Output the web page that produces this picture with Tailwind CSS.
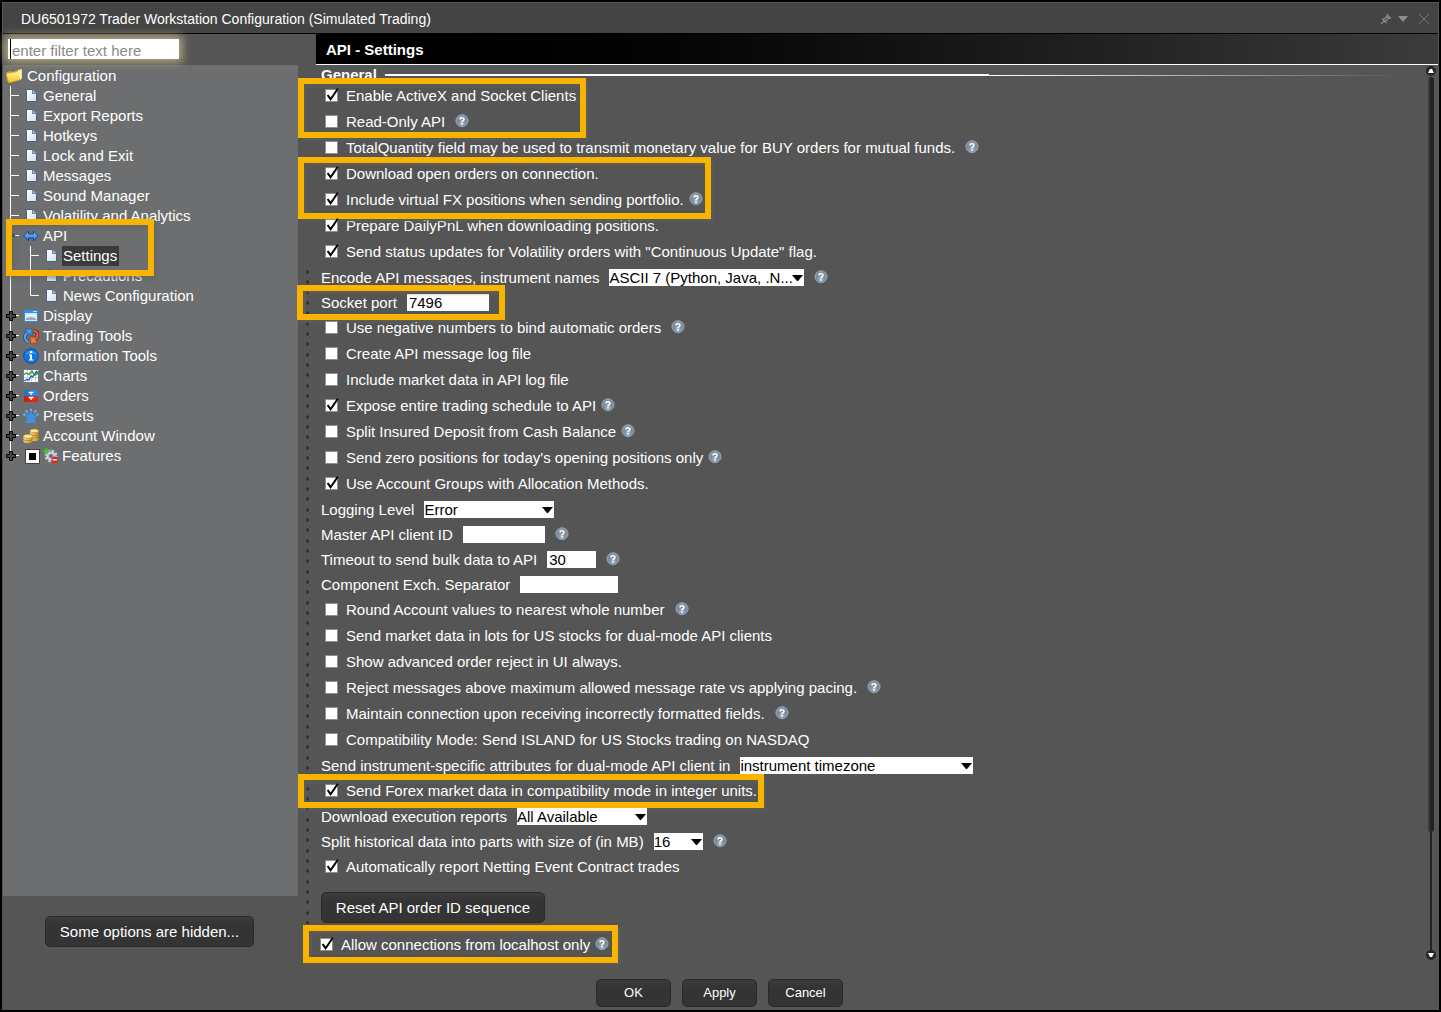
<!DOCTYPE html>
<html lang="en">
<head>
    <meta charset="UTF-8">
    <meta name="viewport" content="width=device-width, initial-scale=1.0">
    <title>Trader Workstation Configuration</title>
    <script src="https://cdn.jsdelivr.net/npm/@tailwindcss/browser@4"></script>
</head>
<body class="bg-black font-['Liberation_Sans',Arial,sans-serif] text-[15px] leading-5 text-white">
    <!-- icon sprite -->
    <svg class="absolute h-0 w-0">
        <defs>
            <radialGradient id="helpFill" cx=".5" cy=".7" r=".6">
                <stop offset="0" stop-color="#a9bccd"/>
                <stop offset=".6" stop-color="#76899c"/>
                <stop offset="1" stop-color="#8593a1"/>
            </radialGradient>
            <linearGradient id="docFill" x1="0" y1="0" x2="1" y2="1">
                <stop offset="0" stop-color="#ffffff"/>
                <stop offset="1" stop-color="#cfe0f5"/>
            </linearGradient>
            <linearGradient id="folderFill" x1="0" y1="0" x2="0" y2="1">
                <stop offset="0" stop-color="#fff3a0"/>
                <stop offset="1" stop-color="#f0c419"/>
            </linearGradient>
            <linearGradient id="blueFill" x1="0" y1="0" x2="0" y2="1">
                <stop offset="0" stop-color="#8cc4fb"/>
                <stop offset="1" stop-color="#1f6fd6"/>
            </linearGradient>
            <linearGradient id="coinFill" x1="0" y1="0" x2="1" y2="0">
                <stop offset="0" stop-color="#fbe08a"/>
                <stop offset="1" stop-color="#c98f22"/>
            </linearGradient>
            <pattern id="dots" width="3" height="31" patternUnits="userSpaceOnUse">
                <rect y="1" width="3" height="2" rx="1" fill="#2c2c2c"/><rect x="1" width="1" height="4" fill="#2c2c2c"/>
                <rect y="11" width="3" height="2" rx="1" fill="#2c2c2c"/><rect x="1" y="10" width="1" height="4" fill="#2c2c2c"/>
                <rect y="22" width="3" height="2" rx="1" fill="#2c2c2c"/><rect x="1" y="21" width="1" height="4" fill="#2c2c2c"/>
            </pattern>
        </defs>
        <symbol id="help" viewBox="0 0 14 14">
            <circle cx="7" cy="7.6" r="6.2" fill="#3f4347"/>
            <circle cx="7" cy="6.8" r="6.1" fill="url(#helpFill)" stroke="#a3adb6" stroke-width=".8"/>
            <path d="M5 5.4C5 3.2 9 3.2 9 5.3C9 6.7 7 6.6 7 8.3" fill="none" stroke="#fff" stroke-width="1.5"/>
            <rect x="6.2" y="9.2" width="1.6" height="1.5" fill="#fff"/>
        </symbol>
        <symbol id="tick" viewBox="0 0 15 15">
            <path d="M2.600 7L5.600 11.200L12.800 .8" fill="none" stroke="#000" stroke-width="2"/>
        </symbol>
        <symbol id="caret" viewBox="0 0 11 6"><path d="M0 0H11L6 6H5Z" fill="#000"/></symbol>
        <symbol id="line" viewBox="0 0 16 20"><path d="M7.5 0V20M8 9.5H17" stroke="#fff" fill="none"/></symbol>
        <symbol id="plus" viewBox="0 0 16 20">
            <path d="M7.5 0V20M8 9.5H17" stroke="#fff" fill="none"/>
            <path d="M6.5 5.5H9.5V8.5H12.5V11.5H9.5V14.5H6.5V11.5H3.5V8.5H6.5Z" fill="#444" stroke="#000"/>
        </symbol>
        <symbol id="plusEnd" viewBox="0 0 16 20">
            <path d="M7.5 0V9M8 9.5H17" stroke="#fff" fill="none"/>
            <path d="M6.5 5.5H9.5V8.5H12.5V11.5H9.5V14.5H6.5V11.5H3.5V8.5H6.5Z" fill="#444" stroke="#000"/>
        </symbol>
        <symbol id="minus" viewBox="0 0 16 20">
            <path d="M12 9.5H17" stroke="#fff" fill="none"/>
            <rect x="9" y="8" width="3" height="3" fill="#444"/>
        </symbol>
        <symbol id="sub" viewBox="0 0 36 20"><path d="M7.5 0V20M27.5 0V20M28 9.5H36" stroke="#fff" fill="none"/></symbol>
        <symbol id="subFirst" viewBox="0 0 36 20"><path d="M27.5 0V20M28 9.5H36" stroke="#fff" fill="none"/></symbol>
        <symbol id="subEnd" viewBox="0 0 36 20"><path d="M7.5 0V20M27.5 0V9.5H36" stroke="#fff" fill="none"/></symbol>
        <symbol id="folder" viewBox="0 0 16 16">
            <path d="M0 4.500L4 3L6 4L14 1L15.500 2.500V11L5 14.500L1 13Z" fill="#d9a81c"/>
            <path d="M0 5.500L11.500 3.500L12.500 4.500L14 12L2.500 15Z" fill="url(#folderFill)" stroke="#b98f14" stroke-width=".6"/>
            <path d="M11.500 3L15.800 1V10.500L14 12Z" fill="#fff2a8"/>
        </symbol>
        <symbol id="doc" viewBox="0 0 16 16">
            <path d="M3.500 1.500H9.500L13.500 5.500V13.500H3.500Z" fill="url(#docFill)" stroke="#4d617f"/>
            <path d="M9.500 1.500V5.500H13.500" fill="#9fb8d8" stroke="#4d617f" stroke-width=".7"/>
        </symbol>
        <symbol id="api" viewBox="0 0 16 16">
            <path d="M.7 8L5.500 3V6H10.500V3L15.300 8L10.500 13V10H5.500V13Z" fill="url(#blueFill)" stroke="#12479a" stroke-width="1"/>
        </symbol>
        <symbol id="display" viewBox="0 0 16 16">
            <rect x="1.500" y="2.500" width="13" height="11" fill="#dceaf8" stroke="#2f8be6"/>
            <rect x="1" y="2" width="14" height="3" fill="#2593f5"/>
            <rect x="10" y="3" width="4" height="1" fill="#bfe0ff"/>
            <path d="M3 10L8 9L13 10.500V12H3Z" fill="#9aa9ba"/>
            <path d="M3 7.500H13" stroke="#fff"/>
        </symbol>
        <symbol id="trading" viewBox="0 0 16 16">
            <path d="M5.500 14C.5 11.500 1 6 5 4.500" fill="none" stroke="#1c4f9c" stroke-width="3.400"/>
            <path d="M5.500 14C.5 11.500 1 6 5 4.500" fill="none" stroke="#6fb0f3" stroke-width="1.600"/>
            <path d="M2.500 .8H9V8L7 5.500L5 7.500L3.500 3Z" fill="#4b94e6" stroke="#1c4f9c" stroke-width=".6"/>
            <path d="M10.500 2.500C16 4 15.500 10 11.500 11.500" fill="none" stroke="#8d2712" stroke-width="3.400"/>
            <path d="M10.500 2.500C16 4 15.500 10 11.500 11.500" fill="none" stroke="#f26640" stroke-width="1.600"/>
            <path d="M14 15H7.500V8L9.500 10L11.500 8.500L13 12.500Z" fill="#fb7748" stroke="#a83216" stroke-width=".6"/>
        </symbol>
        <symbol id="info" viewBox="0 0 16 16">
            <circle cx="8" cy="8" r="7.400" fill="#0f76e0" stroke="#0a53ad"/>
            <path d="M2.500 6A6 5 0 0 1 13.500 6Z" fill="#4ba4f5" opacity=".6"/>
            <rect x="7" y="3" width="2.200" height="2" fill="#fff"/>
            <path d="M6 6.500H9V11.500H10.500V12.500H5.800V11.500H7V7.500H6Z" fill="#fff"/>
        </symbol>
        <symbol id="chart" viewBox="0 0 16 16">
            <rect x=".5" y="1.500" width="15" height="13" fill="#f3f6fa" stroke="#6e7b8c"/>
            <path d="M4.500 2V14M8.500 2V14M12.500 2V14M1 5.500H15M1 9.500H15" stroke="#cbd2dc" fill="none"/>
            <path d="M1 13L4 11.500L6 12L8 8L9.500 9L13.500 3.500L15 5" fill="none" stroke="#2c5fb5" stroke-width="1.300"/>
            <path d="M1 6.500L3.500 5L6 6.500L9 3L11.500 7L15 5.500" fill="none" stroke="#30a424" stroke-width="1.400"/>
        </symbol>
        <symbol id="orders" viewBox="0 0 16 16">
            <rect x="1" y="2" width="14" height="6" fill="#2a84e0"/>
            <rect x="1" y="8" width="14" height="6" fill="#dd2a22"/>
            <path d="M1 2H8V14H1Z" fill="#000" opacity=".12"/>
            <path d="M5.500 4.500H10.500M8 4.500V7M5.500 9.500H10.500M8 9.500V12" stroke="#fff" stroke-width="1.300"/>
        </symbol>
        <symbol id="presets" viewBox="0 0 16 16">
            <path d="M3 14.500L5 10.500L1.300 6.500L6 8.500L3.500 3.500L7.200 7.500L8 1.500L8.800 7.500L12.500 3.500L10 8.500L14.700 6.500L11 10.500L13 14.500Z" fill="#3f90e4" stroke="#3f90e4"/>
            <circle cx="8" cy="1.700" r="1.200" fill="#67b2f5"/><circle cx="3.500" cy="3.300" r="1.200" fill="#67b2f5"/><circle cx="12.500" cy="3.300" r="1.200" fill="#67b2f5"/>
            <circle cx="1.300" cy="6.500" r="1.200" fill="#67b2f5"/><circle cx="14.700" cy="6.500" r="1.200" fill="#67b2f5"/>
        </symbol>
        <symbol id="coins" viewBox="0 0 16 16">
            <path d="M7 3V11A4.300 2 0 0 0 15.600 11V3Z" fill="url(#coinFill)"/>
            <path d="M7 5.500A4.300 2 0 0 0 15.600 5.500M7 8A4.300 2 0 0 0 15.600 8" fill="none" stroke="#9b6a12" stroke-width=".7"/>
            <ellipse cx="11.300" cy="2.800" rx="4.300" ry="1.900" fill="#fbe596" stroke="#a87618" stroke-width=".5"/>
            <path d="M.5 8.500V13A4.500 2 0 0 0 9.500 13V8.500Z" fill="url(#coinFill)"/>
            <path d="M.5 11A4.500 2 0 0 0 9.500 11" fill="none" stroke="#9b6a12" stroke-width=".7"/>
            <ellipse cx="5" cy="8.300" rx="4.500" ry="2" fill="#fbe596" stroke="#a87618" stroke-width=".5"/>
        </symbol>
        <symbol id="features" viewBox="0 0 16 16">
            <circle cx="8" cy="8" r="5.200" fill="none" stroke="#c3c5d6" stroke-width="2.600" stroke-dasharray="2.600 1.480"/>
            <circle cx="8" cy="8" r="3.600" fill="#9a9cb0" stroke="#d2d4e2" stroke-width="2"/>
            <circle cx="8" cy="8" r="1.500" fill="#5d5f6b"/>
            <path d="M3.300 .3V6.300M.3 3.300H6.300" stroke="#3ccc2a" stroke-width="2.200"/>
            <circle cx="11.800" cy="11.800" r="3.200" fill="#e0241b"/>
            <path d="M9.800 11.800H13.800" stroke="#fff" stroke-width="1.400"/>
        </symbol>
    </svg>

    <div class="flex min-h-screen flex-col border-2 border-black">
        <div class="flex flex-1 flex-col border border-[#555] bg-[#555]">
            <header class="flex h-[31px] items-center justify-between border-b border-black bg-[#444] pt-0.5 pr-2 pl-[18px]">
                <h1 class="text-sm">DU6501972 Trader Workstation Configuration (Simulated Trading)</h1>
                <div class="flex items-center text-[#8c8c8c]">
                    <button type="button" aria-label="Pin"><svg class="h-3 w-3" viewBox="0 0 12 12" fill="none" stroke="currentColor" stroke-width="1.2"><path d="M1 11L4.500 7.500M2 5.500L6.500 10M3.500 6.500L7 3.500M5.500 8.500L8.500 5M6.500 1L11 5.500M7.500 2L7 4L8.500 5.500L10.500 5"/></svg></button>
                    <button type="button" class="ml-1.5" aria-label="Menu"><svg class="h-1.5 w-2.5" viewBox="0 0 10 6"><path d="M0 0H10L5 6Z" fill="currentColor"/></svg></button>
                    <button type="button" class="ml-2.5" aria-label="Close"><svg class="h-3 w-3" viewBox="0 0 12 12" stroke="#777" fill="none"><path d="M1 1L11 11M11 1L1 11"/></svg></button>
                </div>
            </header>

            <div class="flex flex-1">
                <aside class="flex w-[295px] shrink-0 flex-col">
                    <div class="h-[31px] pt-[5px] pl-[5px]">
                        <div class="relative z-10 h-5 w-[171px]">
                            <input type="text" aria-label="Filter" placeholder="enter filter text here" class="block h-5 w-full bg-white pt-1 pl-1 text-black shadow-[0_0_10px_3px_rgba(215,205,145,0.75)] outline-none placeholder:text-[#8a8a8a]">
                            <span class="absolute top-0 left-0.5 h-5 w-px bg-black"></span>
                        </div>
                    </div>
                    <nav id="tree" class="flex-1 bg-[#6c6e70] pt-px"></nav>
                    <div class="h-16 pt-5 pl-[42px]">
                        <button type="button" class="h-[31px] w-[209px] rounded-[5px] border border-[#2a2a2a] bg-linear-to-b from-[#3c3c3c] to-[#343434] to-30%">Some options are hidden...</button>
                    </div>
                </aside>

                <!-- splitter -->
                <div class="flex w-[18px] shrink-0 justify-center pt-[236px] pb-9">
                    <svg class="h-full w-[3px]"><rect width="3" height="100%" fill="url(#dots)"/></svg>
                </div>

                <main class="min-w-0 flex-1">
                    <h2 class="flex h-[31px] items-center border-b border-white bg-linear-to-r from-black to-[#3c3c3c] pt-0.5 pl-2.5 font-bold">API - Settings</h2>
                    <div class="flex">
                        <form id="settings" class="min-w-0 flex-1 pb-0.5"></form>
                        <div class="flex w-[15px] flex-col items-center">
                            <button type="button" class="mt-px h-2.5 w-2.5 rounded-full bg-[#262626]" aria-label="Scroll up"><svg class="m-auto h-1 w-1.5" viewBox="0 0 6 4"><path d="M0 4L2 0H4L6 4Z" fill="#fff"/></svg></button>
                            <div class="mt-px w-1.5 flex-[755] rounded-full bg-linear-to-r from-[#444] to-[#222] to-50%"></div>
                            <div class="w-0.5 flex-[118] bg-[#222]"></div>
                            <button type="button" class="h-2.5 w-2.5 rounded-full bg-[#262626]" aria-label="Scroll down"><svg class="m-auto h-1 w-1.5" viewBox="0 0 6 4"><path d="M0 0L2 4H4L6 0Z" fill="#fff"/></svg></button>
                        </div>
                    </div>
                </main>
            </div>

            <footer class="flex h-[49px] justify-center gap-[11px] pt-[19px] pr-0.5 text-[13px]">
                <button type="button" class="h-7 w-[75px] rounded-[5px] border border-[#2a2a2a] bg-linear-to-b from-[#3c3c3c] to-[#343434] to-30%">OK</button>
                <button type="button" class="h-7 w-[75px] rounded-[5px] border border-[#2a2a2a] bg-linear-to-b from-[#3c3c3c] to-[#343434] to-30%">Apply</button>
                <button type="button" class="h-7 w-[75px] rounded-[5px] border border-[#2a2a2a] bg-linear-to-b from-[#3c3c3c] to-[#343434] to-30%">Cancel</button>
            </footer>
        </div>
    </div>

    <script>
        let nextId = 0;

        // help icon; gap is the full class of its left margin
        const help = (gap = 'ml-2.5') => `<svg class="${gap} -mt-0.5 h-3.5 w-3.5 shrink-0"><use href="#help"/></svg>`;

        function check(text, on, after = '', pad = 'pl-[9px]') {
            return `<div class="flex h-[26px] items-center whitespace-nowrap ${pad}">
                <label class="flex items-center gap-2">
                    <span class="relative -mt-0.5 h-[13px] w-[13px]">
                        <input type="checkbox" ${on ? 'checked' : ''} class="peer block h-[13px] w-[13px] appearance-none border border-[#8f8f8f] bg-white">
                        <svg class="pointer-events-none absolute -top-px left-0 hidden h-[15px] w-[15px] peer-checked:block"><use href="#tick"/></svg>
                    </span>
                    ${text}
                </label>${after}
            </div>`;
        }

        function input(text, value, width, after = '') {
            const id = 'field' + nextId++;
            return `<div class="flex h-[25px] items-center whitespace-nowrap pl-[5px]">
                <label for="${id}">${text}</label>
                <input id="${id}" type="text" value="${value}" class="ml-2.5 h-[17px] ${width} bg-white pt-px pl-0.5 text-black outline-none">${after}
            </div>`;
        }

        function select(text, value, width, after = '') {
            const id = 'field' + nextId++;
            return `<div class="flex h-[25px] items-center whitespace-nowrap pl-[5px]">
                <label for="${id}">${text}</label>
                <span class="relative ml-2.5 h-[17px] ${width}">
                    <select id="${id}" class="block h-[17px] w-full appearance-none bg-white leading-[17px] text-black outline-none"><option>${value}</option></select>
                    <svg class="pointer-events-none absolute top-1.5 right-px h-1.5 w-[11px]"><use href="#caret"/></svg>
                </span>${after}
            </div>`;
        }

        // yellow frame around a group of rows
        function mark(rows, frame) {
            return `<div class="relative">${rows}<div class="pointer-events-none absolute border-6 border-[#f9b400] shadow-[3px_3px_3px_rgba(98,98,98,0.5),inset_3px_3px_3px_rgba(98,98,98,0.5)] ${frame}"></div></div>`;
        }

        document.getElementById('settings').innerHTML = [
            `<div class="flex h-[18px] items-center pt-0.5 pl-[5px] font-bold">
                <h3>General</h3>
                <div class="ml-2 h-0.5 flex-[600] bg-white"></div>
                <div class="mt-px mr-4 h-px flex-[415] bg-linear-to-r from-white to-transparent"></div>
            </div>`,
            mark(
                check('Enable ActiveX and Socket Clients', true) +
                check('Read-Only API', false, help()),
                '-top-[5px] -left-[18px] h-[60px] w-[288px]'),
            check('TotalQuantity field may be used to transmit monetary value for BUY orders for mutual funds.', false, help()),
            mark(
                check('Download open orders on connection.', true) +
                check('Include virtual FX positions when sending portfolio.', true, help('ml-[5px]')),
                '-top-1 -left-[18px] h-[62px] w-[413px]'),
            check('Prepare DailyPnL when downloading positions.', true),
            check('Send status updates for Volatility orders with "Continuous Update" flag.', true),
            select('Encode API messages, instrument names', 'ASCII 7 (Python, Java, .N...', 'w-[195px]', help()),
            mark(input('Socket port', '7496', 'w-[82px]'), '-top-[5px] -left-[19px] h-[35px] w-[208px]'),
            check('Use negative numbers to bind automatic orders', false, help()),
            check('Create API message log file', false),
            check('Include market data in API log file', false),
            check('Expose entire trading schedule to API', true, help('ml-[5px]')),
            check('Split Insured Deposit from Cash Balance', false, help('ml-[5px]')),
            check("Send zero positions for today's opening positions only", false, help('ml-[5px]')),
            check('Use Account Groups with Allocation Methods.', true),
            select('Logging Level', 'Error', 'w-[130px]'),
            input('Master API client ID', '', 'w-[82px]', help()),
            input('Timeout to send bulk data to API', '30', 'w-[49px]', help()),
            input('Component Exch. Separator', '', 'w-[98px]'),
            check('Round Account values to nearest whole number', false, help()),
            check('Send market data in lots for US stocks for dual-mode API clients', false),
            check('Show advanced order reject in UI always.', false),
            check('Reject messages above maximum allowed message rate vs applying pacing.', false, help()),
            check('Maintain connection upon receiving incorrectly formatted fields.', false, help()),
            check('Compatibility Mode: Send ISLAND for US Stocks trading on NASDAQ', false),
            select('Send instrument-specific attributes for dual-mode API client in', 'instrument timezone', 'w-[233px]'),
            mark(check('Send Forex market data in compatibility mode in integer units.', true), '-top-1 -left-[18px] h-[34px] w-[466px]'),
            select('Download execution reports', 'All Available', 'w-[130px]'),
            select('Split historical data into parts with size of (in MB)', '16', 'w-[49px]', help()),
            check('Automatically report Netting Event Contract trades', true),
            `<div class="pt-3 pb-[9px] pl-[5px]">
                <button type="button" class="block h-[31px] w-56 rounded-[5px] border border-[#2a2a2a] bg-linear-to-b from-[#3c3c3c] to-[#343434] to-30%">Reset API order ID sequence</button>
            </div>`,
            mark(check('Allow connections from localhost only', true, help('ml-[5px]'), 'pl-1'), '-top-[7px] -left-[13px] h-[38px] w-[315px]')
        ].join('');

        // one line of the tree: connector, its width, icon, label
        function node(line, width, icon, text) {
            return `<a href="#" class="flex h-5 items-center whitespace-nowrap">
                <svg class="h-5 shrink-0 ${width}"><use href="#${line}"/></svg>
                <svg class="ml-1 h-4 w-4 shrink-0"><use href="#${icon}"/></svg>
                <span class="ml-1">${text}</span>
            </a>`;
        }

        const leaf = text => node('line', 'w-4', 'doc', text);
        const branch = (icon, text) => node('plus', 'w-4', icon, text);

        document.getElementById('tree').innerHTML = [
            `<a href="#" class="flex h-5 items-center pl-[3px]"><svg class="h-4 w-4"><use href="#folder"/></svg><span class="ml-[5px]">Configuration</span></a>`,
            leaf('General'),
            leaf('Export Reports'),
            leaf('Hotkeys'),
            leaf('Lock and Exit'),
            leaf('Messages'),
            leaf('Sound Manager'),
            leaf('Volatility and Analytics'),
            mark(
                node('minus', 'w-4', 'api', 'API') +
                `<a href="#" class="flex h-5 items-center">
                    <svg class="h-5 w-9 shrink-0"><use href="#subFirst"/></svg>
                    <svg class="ml-1 h-4 w-4 shrink-0"><use href="#doc"/></svg>
                    <span class="ml-[3px] bg-[#3a3a3a] pr-0.5 pl-px">Settings</span>
                </a>`,
                '-top-[7px] left-[3px] h-[57px] w-[148px]'),
            node('sub', 'w-9', 'doc', 'Precautions'),
            node('subEnd', 'w-9', 'doc', 'News Configuration'),
            branch('display', 'Display'),
            branch('trading', 'Trading Tools'),
            branch('info', 'Information Tools'),
            branch('chart', 'Charts'),
            branch('orders', 'Orders'),
            branch('presets', 'Presets'),
            branch('coins', 'Account Window'),
            `<div class="flex h-5 items-center">
                <svg class="h-5 w-4 shrink-0"><use href="#plusEnd"/></svg>
                <input id="features-on" type="checkbox" class="ml-[7px] h-[13px] w-[13px] appearance-none border-3 border-white bg-black outline outline-[#444]">
                <svg class="ml-1 h-4 w-4 shrink-0"><use href="#features"/></svg>
                <label for="features-on" class="ml-[3px]">Features</label>
            </div>`
        ].join('');
    </script>
</body>
</html>
